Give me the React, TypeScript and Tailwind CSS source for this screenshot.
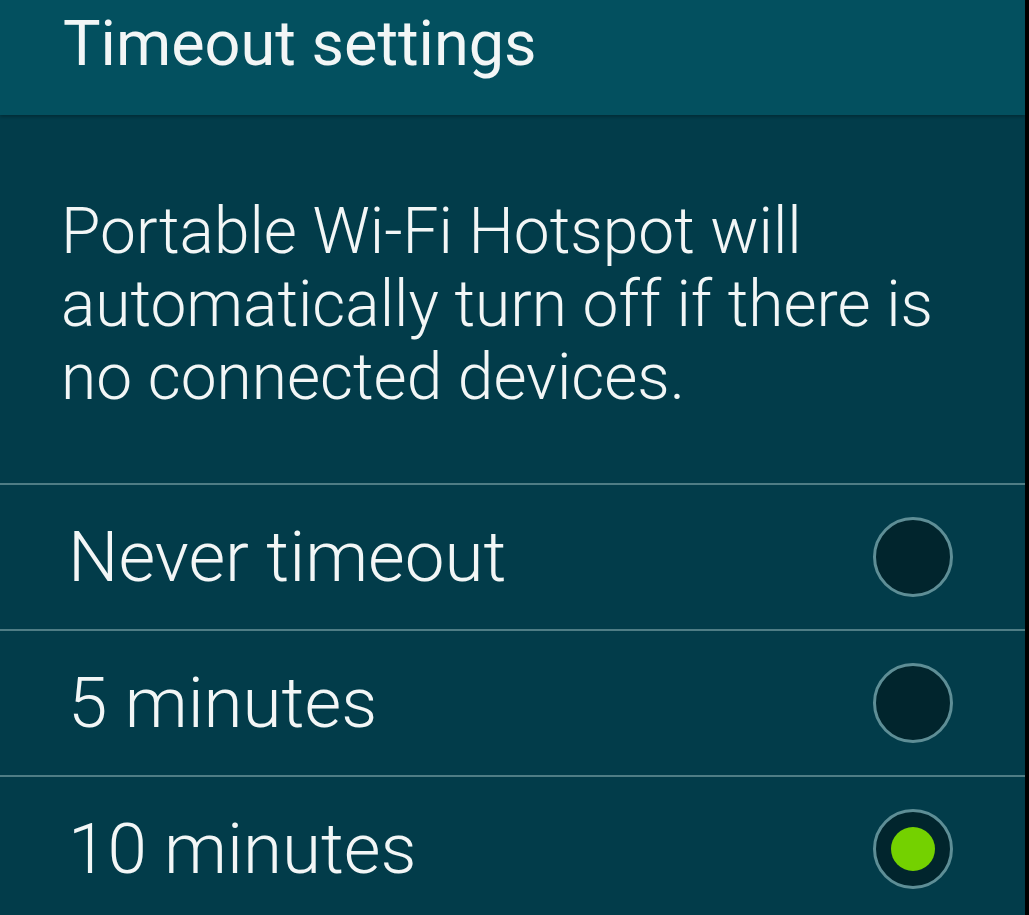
const options = [
  { label: "Never timeout", checked: false },
  { label: "5 minutes", checked: false },
  { label: "10 minutes", checked: true },
];

function Radio({ checked }: { checked: boolean }) {
  return (
    <div className="w-[80px] h-[80px] rounded-full border-[3px] border-[#5e8e96] bg-[#01252d] flex items-center justify-center">
      {checked && <div className="w-[44px] h-[44px] rounded-full bg-[#74d100]" />}
    </div>
  );
}

export default function App() {
  return (
    <div className="w-[1029px] h-[915px] overflow-hidden flex bg-black font-['Roboto',sans-serif] text-[#f2f6f6]">
      <div className="w-[1025px] flex flex-col bg-[#023c4a]">
        <div className="h-[115px] shrink-0 bg-[#03505f] pl-[63px] pt-[2px] shadow-[0_2px_3px_rgba(0,0,0,0.25)]">
          <h1 className="text-[63px] leading-[84px] font-normal">Timeout settings</h1>
        </div>
        <p className="h-[368px] shrink-0 pl-[61px] pt-[80px] text-[64px] leading-[73px] font-light">
          Portable Wi-Fi Hotspot will
          <br />
          automatically turn off if there is
          <br />
          no connected devices.
        </p>
        <ul className="shrink-0">
          {options.map((o) => (
            <li
              key={o.label}
              className="h-[146px] border-t-[2px] border-[#4f7d85] flex items-center justify-between pl-[68px] pr-[72px]"
            >
              <span className="text-[71px] font-light">{o.label}</span>
              <Radio checked={o.checked} />
            </li>
          ))}
        </ul>
      </div>
    </div>
  );
}
